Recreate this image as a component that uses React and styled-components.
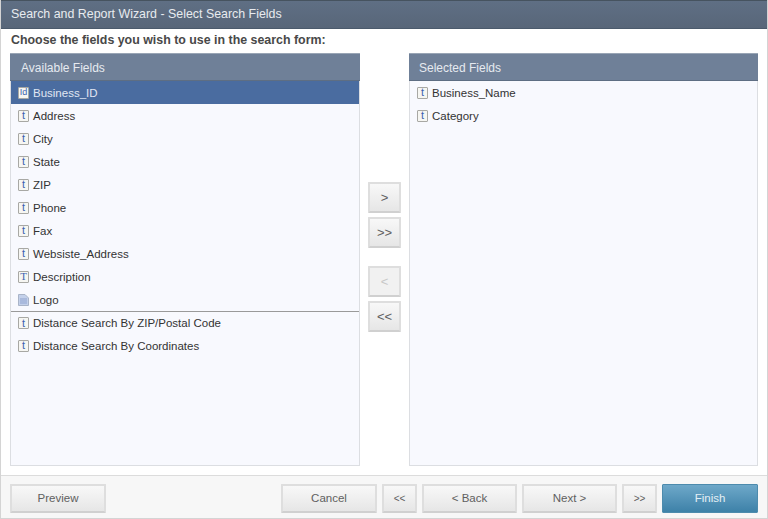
import React from 'react';
import styled, { createGlobalStyle } from 'styled-components';

const GlobalStyle = createGlobalStyle`
    html, body {
        margin: 0;
        padding: 0;
        background: #fff;
    }
    * {
        box-sizing: border-box;
    }
`;

const Wizard = styled.div`
    width: 768px;
    height: 519px;
    display: flex;
    flex-direction: column;
    font-family: "Liberation Sans", Arial, sans-serif;
    font-size: 11.5px;
    color: #333;
    border-left: 1px solid #d4d4d4;
    border-right: 1px solid #d4d4d4;
    border-bottom: 1px solid #d4d4d4;
    overflow: hidden;
`;

const TitleBar = styled.div`
    height: 29px;
    margin: 0 -1px;
    padding: 0 0 1px 11px;
    display: flex;
    align-items: center;
    background: linear-gradient(#5f6f84, #586679);
    border-top: 1px solid #46535f;
    border-bottom: 1px solid #4b5a6c;
    color: #e8ebef;
    font-size: 12.4px;
`;

const Content = styled.div`
    flex: 1;
    min-height: 0;
    display: flex;
    flex-direction: column;
    padding: 3px 9px 9px 9px;
`;

const Instruction = styled.div`
    height: 21px;
    line-height: 17px;
    padding-left: 1px;
    font-size: 12.4px;
    font-weight: 700;
    color: #484848;
`;

const Columns = styled.div`
    flex: 1;
    min-height: 0;
    display: flex;
`;

const Panel = styled.div`
    width: ${(p) => p.$width}px;
    display: flex;
    flex-direction: column;
    border: 1px solid #dcdee2;
    border-top: 0;
    background: #f8f9fe;
`;

const PanelHeader = styled.div`
    height: 28px;
    margin: 0 -1px;
    padding-top: 1px;
    padding-left: ${(p) => p.$inset}px;
    display: flex;
    align-items: center;
    background: #6f8098;
    border-top: 1px solid #99a5b5;
    border-bottom: 1px solid #5e6e83;
    color: #e6eaf0;
    font-size: 12px;
`;

const FieldList = styled.div`
    flex: 1;
    display: flex;
    flex-direction: column;
`;

const Row = styled.div`
    height: 23px;
    padding-left: 7px;
    display: flex;
    align-items: center;
    gap: 4px;
    color: ${(p) => (p.$active ? '#e0e7f3' : '#333')};
    background: ${(p) => (p.$active ? '#4a6ca0' : 'transparent')};
    border-top: ${(p) => (p.$divider ? '1px solid #9a9a9a' : '0')};
`;

const TypeBadge = styled.span`
    width: 11px;
    height: 12px;
    display: flex;
    align-items: center;
    justify-content: center;
    background: #f6f6f2;
    border: 1px solid #a8a8a4;
    border-radius: 1px;
    color: #3a62b0;
    font-size: ${(p) => (p.$wide ? 9 : 11)}px;
    line-height: 1;
    font-family: ${(p) => (p.$serif ? '"Liberation Serif", serif' : 'inherit')};
`;

const FileGlyph = styled.svg`
    width: 11px;
    height: 12px;
    flex: none;
`;

const MoveButtons = styled.div`
    width: 49px;
    padding-top: 129px;
    display: flex;
    flex-direction: column;
    align-items: center;
`;

const BaseButton = styled.button`
    margin: 0;
    padding: 0 0 1px;
    font-family: inherit;
    font-size: 11.5px;
    border: 2px solid #dedede;
    border-bottom-color: #d0d0d0;
    border-radius: 1px;
    background: linear-gradient(#f8f8f8, #e6e6e6);
    color: #606060;
`;

const MoveButton = styled(BaseButton)`
    width: 33px;
    height: 31px;
    margin-bottom: ${(p) => p.$after}px;
    font-size: 13px;
    color: ${(p) => (p.disabled ? '#c8c8c8' : '#606060')};
    background: ${(p) => (p.disabled ? '#f1f1f1' : 'linear-gradient(#f8f8f8, #e6e6e6)')};
`;

const Footer = styled.div`
    height: 43px;
    flex: none;
    padding: 8px 9px 5px 9px;
    display: flex;
    align-items: stretch;
    background: #f7f7f7;
    border-top: 1px solid #dcdcdc;
`;

const WideButton = styled(BaseButton)`
    width: ${(p) => p.$width || 95}px;
    margin-left: ${(p) => p.$gap || 0}px;
`;

const SmallButton = styled(BaseButton)`
    width: 35px;
    margin-left: 5px;
    font-size: 10px;
`;

const FinishButton = styled(BaseButton)`
    width: 96px;
    margin-left: 5px;
    border: 1px solid #4d8bad;
    background: linear-gradient(#6ea8c9, #3d81a8);
    color: #e4eff5;
`;

const Spacer = styled.div`
    flex: 1;
`;

function FieldIcon({ type }) {
    if (type === 'file') {
        return (
            <FileGlyph viewBox="0 0 11 12">
                <path d="M0.5 0.5H7L10.5 4V11.5H0.5Z" fill="#c3d0ea" stroke="#a9b4c8" />
                <path d="M2 5H9M2 7H9M2 9H9" stroke="#8fa3cf" />
            </FileGlyph>
        );
    }
    if (type === 'id') return <TypeBadge $wide>Id</TypeBadge>;
    if (type === 'T') return <TypeBadge $serif>T</TypeBadge>;
    return <TypeBadge>t</TypeBadge>;
}

const available = [
    { name: 'Business_ID', type: 'id', active: true },
    { name: 'Address', type: 't' },
    { name: 'City', type: 't' },
    { name: 'State', type: 't' },
    { name: 'ZIP', type: 't' },
    { name: 'Phone', type: 't' },
    { name: 'Fax', type: 't' },
    { name: 'Websiste_Address', type: 't' },
    { name: 'Description', type: 'T' },
    { name: 'Logo', type: 'file' },
    { name: 'Distance Search By ZIP/Postal Code', type: 't', divider: true },
    { name: 'Distance Search By Coordinates', type: 't' },
];

const selected = [
    { name: 'Business_Name', type: 't' },
    { name: 'Category', type: 't' },
];

function FieldRows({ fields }) {
    return (
        <FieldList>
            {fields.map((field) => (
                <Row key={field.name} $active={field.active} $divider={field.divider}>
                    <FieldIcon type={field.type} />
                    {field.name}
                </Row>
            ))}
        </FieldList>
    );
}

export default function App() {
    return (
        <Wizard>
            <GlobalStyle />
            <TitleBar>Search and Report Wizard - Select Search Fields</TitleBar>
            <Content>
                <Instruction>Choose the fields you wish to use in the search form:</Instruction>
                <Columns>
                    <Panel $width={350}>
                        <PanelHeader $inset={11}>Available Fields</PanelHeader>
                        <FieldRows fields={available} />
                    </Panel>
                    <MoveButtons>
                        <MoveButton $after={4}>&gt;</MoveButton>
                        <MoveButton $after={18}>&gt;&gt;</MoveButton>
                        <MoveButton $after={4} disabled>&lt;</MoveButton>
                        <MoveButton $after={0}>&lt;&lt;</MoveButton>
                    </MoveButtons>
                    <Panel $width={349}>
                        <PanelHeader $inset={10}>Selected Fields</PanelHeader>
                        <FieldRows fields={selected} />
                    </Panel>
                </Columns>
            </Content>
            <Footer>
                <WideButton $width={96}>Preview</WideButton>
                <Spacer />
                <WideButton $width={96}>Cancel</WideButton>
                <SmallButton>&lt;&lt;</SmallButton>
                <WideButton $gap={5}>&lt; Back</WideButton>
                <WideButton $gap={5}>Next &gt;</WideButton>
                <SmallButton>&gt;&gt;</SmallButton>
                <FinishButton>Finish</FinishButton>
            </Footer>
        </Wizard>
    );
}
